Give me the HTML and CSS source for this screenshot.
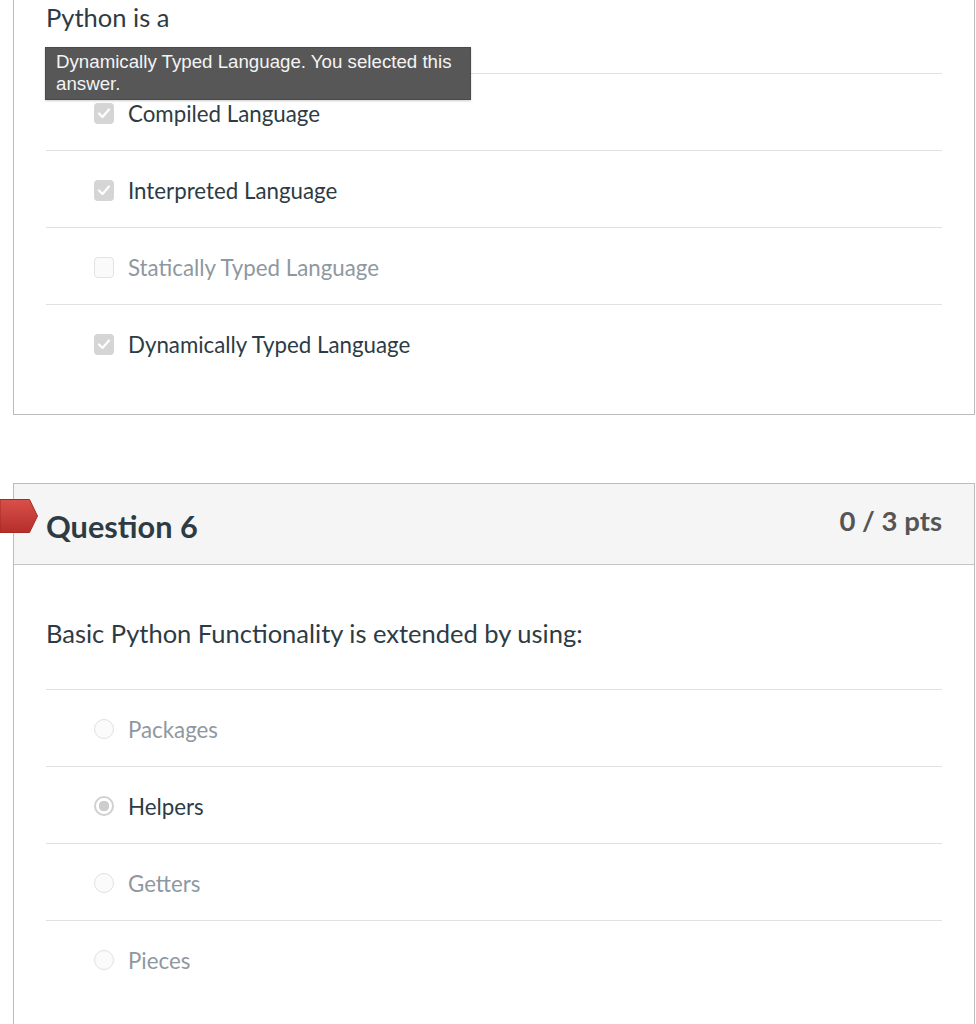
FILE: index.html
```html
<!DOCTYPE html>
<html lang="en">
<head>
<meta charset="utf-8">
<title>Quiz</title>
<link rel="stylesheet" href="styles.css">
</head>
<body>
<div class="page">
  <section class="card card--cropped">
    <div class="card-body card-body--top">
      <p class="question-text">Python is a</p>
      <div class="tooltip">Dynamically Typed Language. You selected this answer.</div>
      <ul class="answers">
        <li class="answer is-selected">
          <span class="checkbox is-checked"><svg viewBox="0 0 20 20" width="20" height="20"><path d="M5 10.5 L8.5 14 L15 6.5" fill="none" stroke="#fff" stroke-width="2.2" stroke-linecap="round" stroke-linejoin="round"/></svg></span>
          <span class="label">Compiled Language</span>
        </li>
        <li class="answer is-selected">
          <span class="checkbox is-checked"><svg viewBox="0 0 20 20" width="20" height="20"><path d="M5 10.5 L8.5 14 L15 6.5" fill="none" stroke="#fff" stroke-width="2.2" stroke-linecap="round" stroke-linejoin="round"/></svg></span>
          <span class="label">Interpreted Language</span>
        </li>
        <li class="answer">
          <span class="checkbox"></span>
          <span class="label">Statically Typed Language</span>
        </li>
        <li class="answer is-selected">
          <span class="checkbox is-checked"><svg viewBox="0 0 20 20" width="20" height="20"><path d="M5 10.5 L8.5 14 L15 6.5" fill="none" stroke="#fff" stroke-width="2.2" stroke-linecap="round" stroke-linejoin="round"/></svg></span>
          <span class="label">Dynamically Typed Language</span>
        </li>
      </ul>
    </div>
  </section>

  <section class="card">
    <svg class="flag" viewBox="0 0 38 34" width="38" height="34">
      <defs>
        <linearGradient id="flagGrad" x1="0" y1="0" x2="0" y2="1">
          <stop offset="0" stop-color="#d9504a"/>
          <stop offset="1" stop-color="#b52e29"/>
        </linearGradient>
      </defs>
      <polygon points="0,0.5 29.5,0.5 37.5,17 29.5,33.5 0,33.5" fill="url(#flagGrad)" stroke="#a52a25" stroke-width="1"/>
    </svg>
    <header class="card-header">
      <h2 class="question-title">Question 6</h2>
      <span class="points">0 / 3 pts</span>
    </header>
    <div class="card-body card-body--padded">
      <p class="question-text">Basic Python Functionality is extended by using:</p>
      <ul class="answers">
        <li class="answer">
          <span class="radio"></span>
          <span class="label">Packages</span>
        </li>
        <li class="answer is-selected">
          <span class="radio is-checked"></span>
          <span class="label">Helpers</span>
        </li>
        <li class="answer">
          <span class="radio"></span>
          <span class="label">Getters</span>
        </li>
        <li class="answer">
          <span class="radio"></span>
          <span class="label">Pieces</span>
        </li>
      </ul>
    </div>
  </section>
</div>
</body>
</html>
```

FILE: styles.css
```css
* {
  box-sizing: border-box;
}

html, body {
  margin: 0;
  padding: 0;
  background: #ffffff;
}

body {
  font-family: Lato, "Open Sans", "Liberation Sans", sans-serif;
  color: #2d3b45;
  overflow: hidden;
}

.page {
  padding-left: 13px;
  display: flex;
  flex-direction: column;
  gap: 68px;
}

.card {
  position: relative;
  width: 962px;
  border: 1px solid #bcbcbc;
  background: #fff;
}

.card--cropped {
  border-top: 0;
}

.card-body {
  position: relative;
  padding: 0 32px 33px 32px;
}

.card-body--top {
  padding-top: 1px;
}

.card-body--padded {
  padding-top: 52px;
}

.question-text {
  margin: 0 0 40px 0;
  font-size: 25.5px;
  line-height: 32px;
  color: #2d3b45;
}

.answers {
  list-style: none;
  margin: 0;
  padding: 0;
}

.answer {
  display: flex;
  align-items: center;
  gap: 14px;
  height: 77px;
  padding-left: 48px;
  padding-top: 2px;
  border-top: 1px solid #e1e1e1;
}

.label {
  font-size: 22.3px;
  color: #8f989f;
}

.answer.is-selected .label {
  color: #2d3b45;
}

.checkbox {
  flex: none;
  width: 20px;
  height: 21px;
  border-radius: 4px;
  border: 1px solid #e3e3e3;
  background: #fafafa;
  display: flex;
  align-items: center;
  justify-content: center;
}

.checkbox.is-checked {
  border: 0;
  background: #d5d5d5;
}

.checkbox svg {
  display: block;
}

.radio {
  flex: none;
  width: 20px;
  height: 20px;
  border-radius: 50%;
  border: 1.5px solid #e1e1e1;
  background: #fbfbfb;
}

.radio.is-checked {
  border: 2px solid #d0d0d0;
  background: radial-gradient(circle, #cdcdcd 0 5px, #ffffff 5.5px);
}

.tooltip {
  position: absolute;
  left: 31px;
  top: 47px;
  width: 426px;
  padding: 3px 10px 4px 10px;
  background: #575757;
  border: 1px solid #4a4a4a;
  color: #f4f4f4;
  font-family: "Liberation Sans", Arial, Helvetica, sans-serif;
  font-size: 18.7px;
  line-height: 22px;
  box-shadow: 0 1px 2px rgba(0,0,0,0.2);
  z-index: 2;
}

.card-header {
  display: flex;
  justify-content: space-between;
  align-items: flex-start;
  height: 81px;
  padding: 0 32px;
  background: #f5f5f5;
  border-bottom: 1px solid #c4c4c4;
}

.question-title {
  margin: 25px 0 0 0;
  font-size: 30.7px;
  font-weight: 700;
  line-height: 1.2;
  color: #2d3b45;
}

.points {
  margin-top: 20px;
  font-size: 27.5px;
  font-weight: 700;
  line-height: 1.2;
  color: #555555;
}

.flag {
  position: absolute;
  left: -14px;
  top: 15px;
  display: block;
  z-index: 1;
}
```
